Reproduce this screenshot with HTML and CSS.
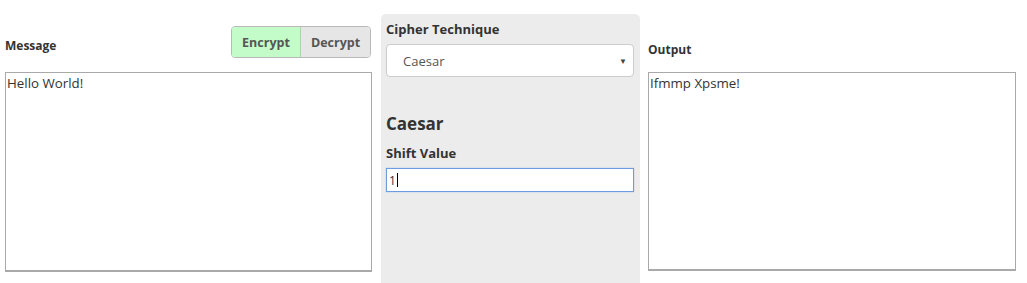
FILE: index.html
```html
<!DOCTYPE html>
<html>
<head>
<meta charset="utf-8">
<link rel="stylesheet" href="styles.css">
</head>
<body>
<div class="app">
  <section class="col col-left">
    <div class="head-row">
      <label class="lbl">Message</label>
      <div class="toggle">
        <button class="tbtn active">Encrypt</button>
        <button class="tbtn">Decrypt</button>
      </div>
    </div>
    <textarea class="box box-in">Hello World!</textarea>
  </section>
  <section class="panel">
    <label class="lbl lbl-panel">Cipher Technique</label>
    <div class="select">
      <span>Caesar</span>
      <span class="arrow">&#9660;</span>
    </div>
    <h3 class="cipher-title">Caesar</h3>
    <label class="lbl lbl-shift">Shift Value</label>
    <div class="num-input">1<span class="caret"></span></div>
  </section>
  <section class="col col-right">
    <label class="lbl lbl-out">Output</label>
    <textarea class="box box-out">Ifmmp Xpsme!</textarea>
  </section>
</div>
</body>
</html>
```
FILE: styles.css
```css
html, body {
  margin: 0;
  padding: 0;
  background: #fff;
  height: 283px;
  overflow: hidden;
}
body {
  font-family: "Open Sans", "Noto Sans", sans-serif;
  color: #333;
}
.app {
  display: flex;
  align-items: flex-start;
  padding: 14px 0 0 5px;
}
.col-left {
  width: 367px;
  display: flex;
  flex-direction: column;
  padding-top: 12px;
}
.head-row {
  display: flex;
  justify-content: space-between;
  align-items: center;
  height: 32px;
  margin-bottom: 14px;
}
.lbl {
  font-family: "Open Sans", sans-serif;
  font-weight: 700;
  font-size: 12px;
  color: #333;
  display: block;
}
.head-row .lbl {
  padding-top: 6px;
}
.toggle {
  display: flex;
  border: 1px solid #b9b9b9;
  border-radius: 4px;
  overflow: hidden;
  margin-right: 1px;
  height: 32px;
  box-sizing: border-box;
}
.tbtn {
  font-family: "Open Sans", sans-serif;
  font-weight: 700;
  font-size: 12.5px;
  color: #555;
  background: #e6e6e6;
  border: 0;
  padding: 0;
  margin: 0;
  height: 30px;
  width: 69px;
}
.tbtn.active {
  background: #c3fcc9;
  border-right: 1px solid #a6d8aa;
}
.box {
  box-sizing: border-box;
  font-family: "Open Sans", sans-serif;
  font-size: 13.3px;
  color: #333;
  border: 1px solid #a9a9a9;
  border-width: 1px 1px 2px 1px;
  padding: 1px 0 1px 1px;
  margin: 0;
  resize: none;
  background: #fff;
  line-height: 18px;
}
.box-in {
  width: 367px;
  height: 200px;
}
.panel {
  margin-left: 9px;
  width: 259px;
  height: 269px;
  background: #ececec;
  border-radius: 5px 5px 0 0;
  box-sizing: border-box;
  padding: 7px 6px 0 5px;
}
.lbl-panel {
  font-size: 13px;
  line-height: 16px;
  margin-bottom: 7px;
}
.select {
  height: 33px;
  box-sizing: border-box;
  background: #fff;
  border: 1px solid #ccc;
  border-radius: 4px;
  display: flex;
  align-items: center;
  justify-content: space-between;
  padding: 0 6px 0 16px;
  font-size: 13px;
  color: #555;
}
.arrow {
  font-size: 8px;
  color: #444;
}
.cipher-title {
  font-family: "Open Sans", sans-serif;
  font-size: 17px;
  font-weight: 700;
  margin: 36px 0 10px;
  line-height: 22px;
  color: #333;
}
.lbl-shift {
  font-size: 13px;
  line-height: 16px;
  margin-bottom: 7px;
}
.num-input {
  height: 24px;
  box-sizing: border-box;
  background: #fff;
  border: 1px solid #6f9ce0;
  box-shadow: 0 0 1px #8fb3ea;
  display: flex;
  align-items: center;
  padding-left: 2px;
  font-size: 12px;
  color: #333;
}
.caret {
  display: inline-block;
  width: 1px;
  height: 14px;
  background: #000;
  margin-left: 1px;
}
.col-right {
  margin-left: 8px;
  width: 368px;
  padding-top: 27px;
}
.lbl-out {
  margin-bottom: 14px;
}
.box-out {
  width: 368px;
  height: 199px;
}
```
